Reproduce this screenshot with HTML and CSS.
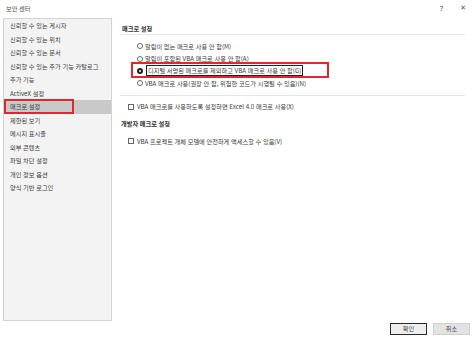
FILE: index.html
```html
<!DOCTYPE html>
<html lang="ko">
<head>
<meta charset="utf-8">
<title>보안 센터</title>
<link rel="stylesheet" href="styles.css">
</head>
<body>
<div class="window">
  <div class="titlebar">
    <span class="title">보안 센터</span>
    <span class="tb-btns"><span class="help">?</span><span class="close">✕</span></span>
  </div>
  <div class="main">
    <ul class="sidebar">
      <li>신뢰할 수 있는 게시자</li>
      <li>신뢰할 수 있는 위치</li>
      <li>신뢰할 수 있는 문서</li>
      <li>신뢰할 수 있는 추가 기능 카탈로그</li>
      <li>추가 기능</li>
      <li>ActiveX 설정</li>
      <li class="selected">매크로 설정<span class="mark side-mark"></span></li>
      <li>제한된 보기</li>
      <li>메시지 표시줄</li>
      <li>외부 콘텐츠</li>
      <li>파일 차단 설정</li>
      <li>개인 정보 옵션</li>
      <li>양식 기반 로그인</li>
    </ul>
    <div class="content">
      <div class="section-title">매크로 설정</div>
      <div class="radios">
        <div class="row"><span class="radio"></span><span>알림이 없는 매크로 사용 안 함(M)</span></div>
        <div class="row"><span class="radio"></span><span>알림이 포함된 VBA 매크로 사용 안 함(A)</span></div>
        <div class="row"><span class="radio checked"></span><span class="focus">디지털 서명된 매크로를 제외하고 VBA 매크로 사용 안 함(G)</span><span class="mark row-mark"></span></div>
        <div class="row"><span class="radio"></span><span>VBA 매크로 사용(권장 안 함, 위험한 코드가 시행될 수 있음)(N)</span></div>
      </div>
      <div class="check-row first"><span class="check"></span><span>VBA 매크로를 사용하도록 설정하면 Excel 4.0 매크로 사용(X)</span></div>
      <div class="section-title plain">개발자 매크로 설정</div>
      <div class="check-row"><span class="check"></span><span>VBA 프로젝트 개체 모델에 안전하게 액세스할 수 있음(V)</span></div>
    </div>
  </div>
  <div class="footer">
    <button class="btn default">확인</button>
    <button class="btn">취소</button>
  </div>
</div>
</body>
</html>
```
FILE: styles.css
```css
* { box-sizing: border-box; }
html, body { margin: 0; padding: 0; background: #fff; }
body {
  width: 474px;
  height: 341px;
  overflow: hidden;
  font-family: "Noto Sans CJK KR", "Noto Sans", sans-serif;
  font-size: 6.2px;
  color: #3a3a3a;
}
.window { display: flex; flex-direction: column; height: 341px; }
.titlebar {
  height: 18px;
  display: flex;
  align-items: center;
  justify-content: space-between;
  padding: 0 8px 2px 6px;
  color: #4a4a4a;
}
.tb-btns { display: flex; gap: 17px; align-items: center; }
.help { font-size: 7px; font-family: "Noto Sans", sans-serif; color: #444; }
.close { font-size: 7px; font-family: "DejaVu Sans", sans-serif; color: #555; }
.main { display: flex; height: 303px; padding-left: 3px; }
.sidebar {
  list-style: none;
  margin: 0;
  padding: 0;
  width: 109px;
  height: 303px;
  border: 1px solid #d3d3d3;
  background: #f3f3f3;
}
.sidebar li {
  position: relative;
  height: 13.5px;
  line-height: 13.5px;
  padding-left: 6px;
  white-space: nowrap;
}
.sidebar li.selected { background: #c9c9c9; }
.mark { position: absolute; border: 2px solid #e3262b; pointer-events: none; }
.side-mark { left: 0; top: -1px; width: 70px; height: 15px; }
.content { flex: 1; padding: 0 9px 0 8px; }
.section-title {
  margin-top: 5px;
  height: 12px;
  line-height: 12px;
  padding-left: 2px;
  font-weight: bold;
  color: #333;
  border-bottom: 1px solid #e6e6e6;
}
.section-title.plain { border-bottom: none; margin-top: 5px; padding-left: 1px; }
.radios {
  padding: 5.4px 0 5.8px 17px;
  border-bottom: 1px solid #e6e6e6;
}
.row {
  position: relative;
  height: 12.2px;
  display: flex;
  align-items: center;
  gap: 2px;
  white-space: nowrap;
}
.radio {
  width: 6px;
  height: 6px;
  border: 1px solid #666;
  border-radius: 50%;
  background: #fff;
  flex: none;
}
.radio.checked { border: 2px solid #1f1f1f; }
.focus { border: 1px solid #222; padding: 0 1px; line-height: 9px; margin-left: 1px; }
.row-mark { left: -6px; top: -2.6px; width: 198px; height: 16px; }
.check-row {
  margin-top: 5px;
  height: 12px;
  display: flex;
  align-items: center;
  gap: 3px;
  padding-left: 8px;
  white-space: nowrap;
}
.check-row.first { margin-top: 5px; }
.check-row + .section-title { margin-top: 5px; }
.section-title + .check-row { margin-top: 5.5px; }
.check {
  width: 6px;
  height: 6px;
  border: 1px solid #666;
  background: #fff;
  flex: none;
}
.footer {
  height: 20px;
  display: flex;
  justify-content: flex-end;
  align-items: flex-start;
  gap: 6px;
  padding: 2px 4px 0 0;
}
.btn {
  width: 37px;
  height: 12px;
  padding: 0;
  margin: 0;
  font-family: inherit;
  font-size: 6.2px;
  color: #444;
  background: #e3e3e3;
  border: 1px solid #cfcfcf;
  line-height: 10px;
}
.btn.default { background: #eeeeee; border: 1px solid #2b2b2b; }
```
